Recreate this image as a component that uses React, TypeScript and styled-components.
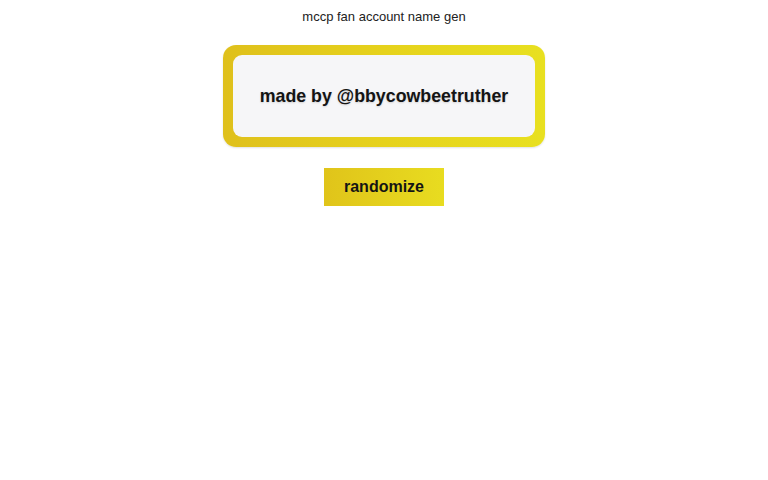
import React, { useState } from "react";
import styled, { createGlobalStyle } from "styled-components";

const GlobalStyle = createGlobalStyle`
  html, body {
    margin: 0;
    background: #ffffff;
  }
  body {
    font-family: "Liberation Sans", Arial, sans-serif;
    color: #111;
  }
`;

const Page = styled.div`
  display: flex;
  flex-direction: column;
  align-items: center;
  padding-top: 9px;
`;

const Title = styled.div`
  font-size: 13px;
  line-height: 15px;
  color: #222;
`;

const Frame = styled.div`
  margin-top: 21px;
  width: 322px;
  height: 102px;
  box-sizing: border-box;
  padding: 10px;
  border-radius: 13px;
  background: linear-gradient(90deg, #dfc01c 0%, #e6d21c 50%, #e8e020 100%);
  box-shadow: 0 1px 2px rgba(0, 0, 0, 0.12);
`;

const NameBox = styled.div`
  height: 100%;
  border-radius: 9px;
  background: #f6f6f8;
  display: flex;
  align-items: center;
  justify-content: center;
`;

const NameText = styled.div`
  font-size: 17.8px;
  font-weight: bold;
  color: #141414;
  text-shadow: 0 1px 2px rgba(0, 0, 0, 0.15);
`;

const RandomButton = styled.button`
  margin-top: 21px;
  width: 120px;
  height: 38px;
  border: none;
  padding: 0;
  background: linear-gradient(90deg, #e0c41a 0%, #e8dc20 100%);
  font-family: "Liberation Sans", Arial, sans-serif;
  font-size: 16px;
  font-weight: bold;
  color: #141414;
  cursor: pointer;
`;

const names = [
  "made by @bbycowbeetruther",
  "quackityscrumbs",
  "tubbosdiscs",
  "ranbooslibrary",
  "philzamichael",
];

export default function App() {
  const [name, setName] = useState(names[0]);

  const handleRandomize = () => {
    const pick = names[Math.floor(Math.random() * (names.length - 1)) + 1];
    setName(pick);
  };

  return (
    <Page>
      <GlobalStyle />
      <Title>mccp fan account name gen</Title>
      <Frame>
        <NameBox>
          <NameText>{name}</NameText>
        </NameBox>
      </Frame>
      <RandomButton onClick={handleRandomize}>randomize</RandomButton>
    </Page>
  );
}
